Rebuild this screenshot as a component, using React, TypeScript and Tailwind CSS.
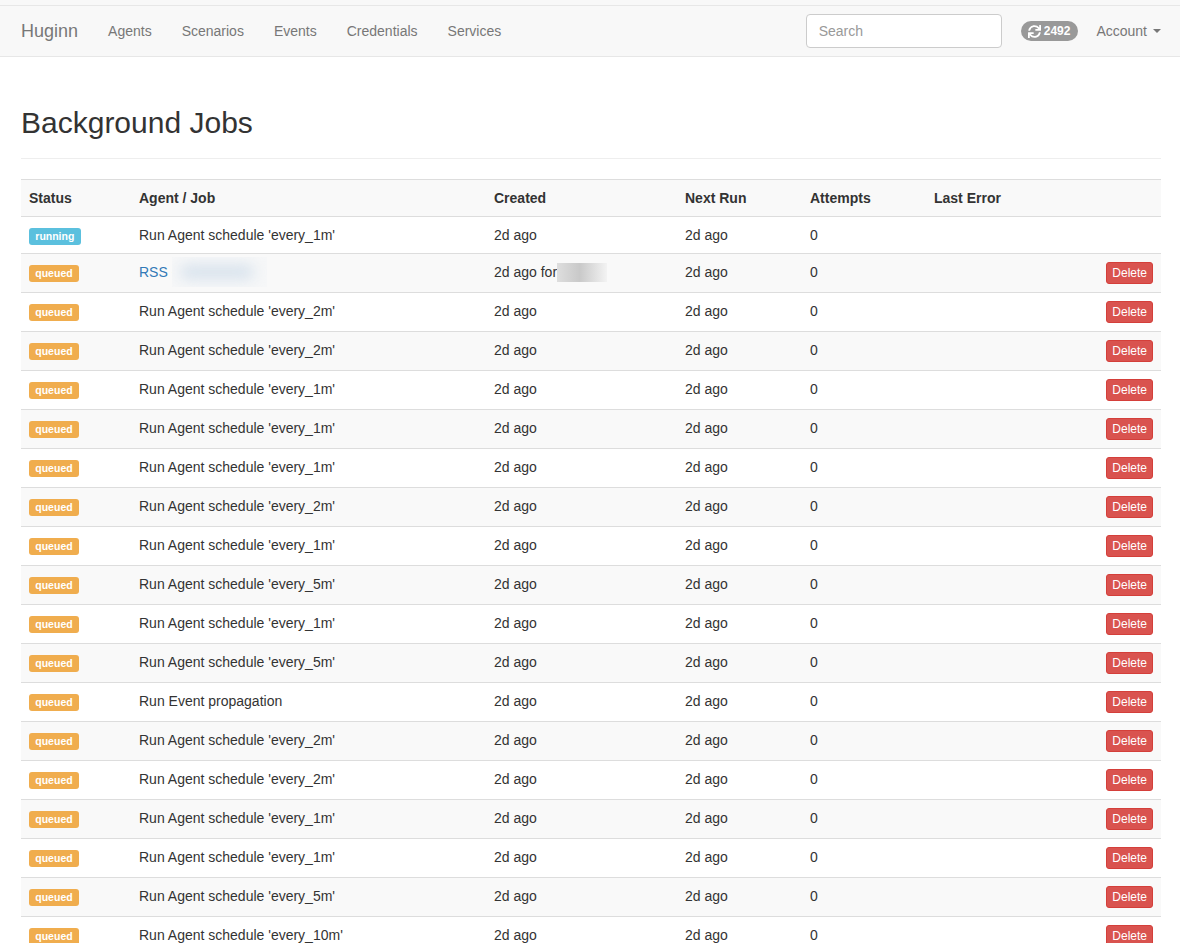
import React from "react";
import { FaSync } from "react-icons/fa";

const schedules = [
  "every_2m",
  "every_2m",
  "every_1m",
  "every_1m",
  "every_1m",
  "every_2m",
  "every_1m",
  "every_5m",
  "every_1m",
  "every_5m",
  "",
  "every_2m",
  "every_2m",
  "every_1m",
  "every_1m",
  "every_5m",
  "every_10m",
];

const navLinks = ["Agents", "Scenarios", "Events", "Credentials", "Services"];

const headers = ["Status", "Agent / Job", "Created", "Next Run", "Attempts", "Last Error", ""];

const cell = "px-2 py-2 align-top border-t border-[#ddd]";

const Queued = () => (
  <span className="inline rounded-[3px] bg-[#f0ad4e] px-[6.3px] pt-[2.1px] pb-[3.15px] text-[10.5px] leading-none font-bold text-white">
    queued
  </span>
);

const DeleteButton = () => (
  <button className="ml-auto block h-[22px] rounded-[3px] border border-[#d43f3a] bg-[#d9534f] px-[5px] text-xs leading-[18px] text-white">
    Delete
  </button>
);

const Row = ({ job, striped }: { job: string; striped: boolean }) => (
  <tr className={striped ? "h-[39px] bg-[#f9f9f9]" : "h-[39px] bg-white"}>
    <td className={cell}>
      <Queued />
    </td>
    <td className={cell}>{job}</td>
    <td className={cell}>2d ago</td>
    <td className={cell}>2d ago</td>
    <td className={cell}>0</td>
    <td className={cell}></td>
    <td className={cell}>
      <DeleteButton />
    </td>
  </tr>
);

const App = () => {
  return (
    <div className="h-[943px] overflow-hidden bg-white font-['Liberation_Sans',Arial,sans-serif] text-sm leading-5 text-[#333]">
      <div className="h-[5px] bg-[#f8f8f8]" />
      <nav className="flex h-[52px] items-center border-y border-[#e7e7e7] bg-[#f8f8f8] pr-[19px] pl-[21px] text-[#777]">
        <span className="mr-[15px] text-lg">Huginn</span>
        {navLinks.map((l) => (
          <a key={l} className="px-[15px]">
            {l}
          </a>
        ))}
        <input
          placeholder="Search"
          className="ml-auto h-[34px] w-[196px] rounded border border-[#ccc] bg-white px-3 text-sm outline-none placeholder:text-[#999]"
        />
        <span className="ml-[19px] flex h-5 items-center gap-[3px] rounded-[10px] bg-[#999] pr-2 pl-[7px] text-xs font-bold text-white">
          <FaSync className="h-[13px] w-[13px]" />
          2492
        </span>
        <span className="ml-[18px]">Account</span>
        <span className="ml-[6px] h-0 w-0 border-x-4 border-t-4 border-x-transparent border-t-[#777]" />
      </nav>

      <div className="pr-[19px] pl-[21px]">
        <div className="mt-[49px] border-b border-[#eee] pb-[19px]">
          <h2 className="text-[30px] leading-[33px] font-normal">Background Jobs</h2>
        </div>
        <table className="mt-5 w-[1140px] table-fixed border-collapse border-t border-[#ddd]">
          <colgroup>
            <col className="w-[110px]" />
            <col className="w-[355px]" />
            <col className="w-[191px]" />
            <col className="w-[125px]" />
            <col className="w-[124px]" />
            <col className="w-[100px]" />
            <col />
          </colgroup>
          <thead>
            <tr className="h-[37px] bg-[#f9f9f9]">
              {headers.map((h, i) => (
                <th key={i} className="border-b border-[#ddd] px-2 py-2 text-left align-top font-bold">
                  {h}
                </th>
              ))}
            </tr>
          </thead>
          <tbody>
            <tr className="h-[37px] bg-white">
              <td className={cell}>
                <span className="inline rounded-[3px] bg-[#5bc0de] px-[6.3px] pt-[2.1px] pb-[3.15px] text-[10.5px] leading-none font-bold text-white">
                  running
                </span>
              </td>
              <td className={cell}>Run Agent schedule 'every_1m'</td>
              <td className={cell}>2d ago</td>
              <td className={cell}>2d ago</td>
              <td className={cell}>0</td>
              <td className={cell}></td>
              <td className={cell}></td>
            </tr>
            <tr className="h-[39px] bg-[#f9f9f9]">
              <td className={cell}>
                <Queued />
              </td>
              <td className={cell}>
                <div className="flex h-5 items-center">
                  <a className="whitespace-pre text-[#337ab7]">RSS -</a>
                  <span className="-ml-[4px] block h-[30px] w-[95px] shrink-0 overflow-hidden bg-[#f6f7f8]">
                    <span className="mt-2 ml-[8px] block h-[14px] w-[74px] rounded-full bg-[#d6e1ec] blur-[7px]" />
                  </span>
                </div>
              </td>
              <td className={cell}>
                <div className="flex h-5 items-center">
                  2d ago for
                  <span className="block h-[19px] w-[50px] shrink-0 bg-gradient-to-r from-[#dedede] via-[#c9c9c9] via-45% to-[#f3f3f3]" />
                </div>
              </td>
              <td className={cell}>2d ago</td>
              <td className={cell}>0</td>
              <td className={cell}></td>
              <td className={cell}>
                <DeleteButton />
              </td>
            </tr>
            {schedules.map((s, i) => (
              <Row
                key={i}
                job={s ? `Run Agent schedule '${s}'` : "Run Event propagation"}
                striped={i % 2 === 1}
              />
            ))}
          </tbody>
        </table>
      </div>
    </div>
  );
};

export default App;
